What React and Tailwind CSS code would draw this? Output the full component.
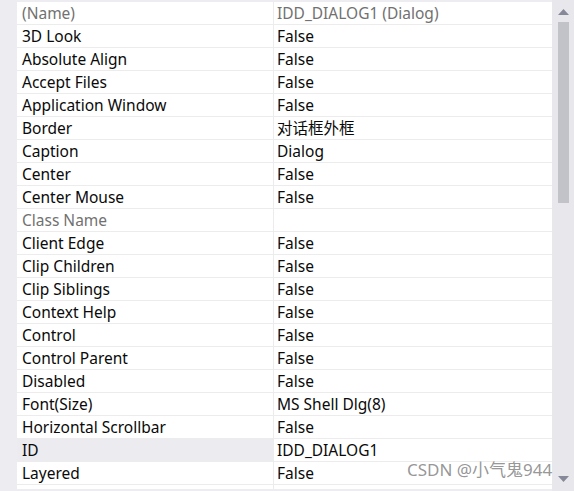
import React from "react";

const rows = [
  ["(Name)", "IDD_DIALOG1 (Dialog)", "gray"],
  ["3D Look", "False"],
  ["Absolute Align", "False"],
  ["Accept Files", "False"],
  ["Application Window", "False"],
  ["Border", "对话框外框"],
  ["Caption", "Dialog"],
  ["Center", "False"],
  ["Center Mouse", "False"],
  ["Class Name", "", "grayLabel"],
  ["Client Edge", "False"],
  ["Clip Children", "False"],
  ["Clip Siblings", "False"],
  ["Context Help", "False"],
  ["Control", "False"],
  ["Control Parent", "False"],
  ["Disabled", "False"],
  ["Font(Size)", "MS Shell Dlg(8)"],
  ["Horizontal Scrollbar", "False"],
  ["ID", "IDD_DIALOG1", "selected"],
  ["Layered", "False"],
  ["", ""],
];

export default function App() {
  return (
    <div
      className="relative w-[574px] h-[491px] bg-[#ededf1] flex overflow-hidden"
      style={{ fontFamily: '"Noto Sans", "Noto Sans CJK SC", sans-serif' }}
    >
      <div className="pl-[17px] pt-[2px] w-[552px] shrink-0">
        <div className="h-[487px] overflow-hidden bg-white">
          {rows.map(([label, value, kind], i) => (
            <div key={i} className="flex h-[23px] border-b border-[#ececec]">
              <div
                className={
                  "w-[256px] shrink-0 pl-[5px] pt-[2px] flex items-center text-[15.5px] leading-none " +
                  (kind === "selected" ? "bg-[#ececf0] " : "") +
                  (kind === "gray" || kind === "grayLabel" ? "text-[#717171]" : "text-[#0a0a0a]")
                }
              >
                {label}
              </div>
              <div className="w-px bg-[#ececec] shrink-0" />
              <div
                className={
                  "flex-1 pl-[3px] pt-[2px] flex items-center text-[15.5px] leading-none " +
                  (kind === "gray" ? "text-[#717171]" : "text-[#0a0a0a]")
                }
              >
                {value}
              </div>
            </div>
          ))}
        </div>
      </div>
      <div className="w-[22px] shrink-0 bg-[#e8e8ec] flex flex-col items-center pt-[9px]">
        <svg width="11" height="6" viewBox="0 0 11 6">
          <polygon points="0,6 11,6 5.5,0" fill="#868999" />
        </svg>
        <div className="mt-[7px] w-[11px] h-[181px] bg-[#c2c3c9]" />
        <div className="flex-1" />
        <svg width="11" height="6" viewBox="0 0 11 6" className="mb-[9px]">
          <polygon points="0,0 11,0 5.5,6" fill="#868999" />
        </svg>
      </div>
      <div className="absolute left-[407px] top-[461px] text-[17px] leading-none text-[#8a8a8a]/90 whitespace-nowrap">
        CSDN @小气鬼944
      </div>
    </div>
  );
}
